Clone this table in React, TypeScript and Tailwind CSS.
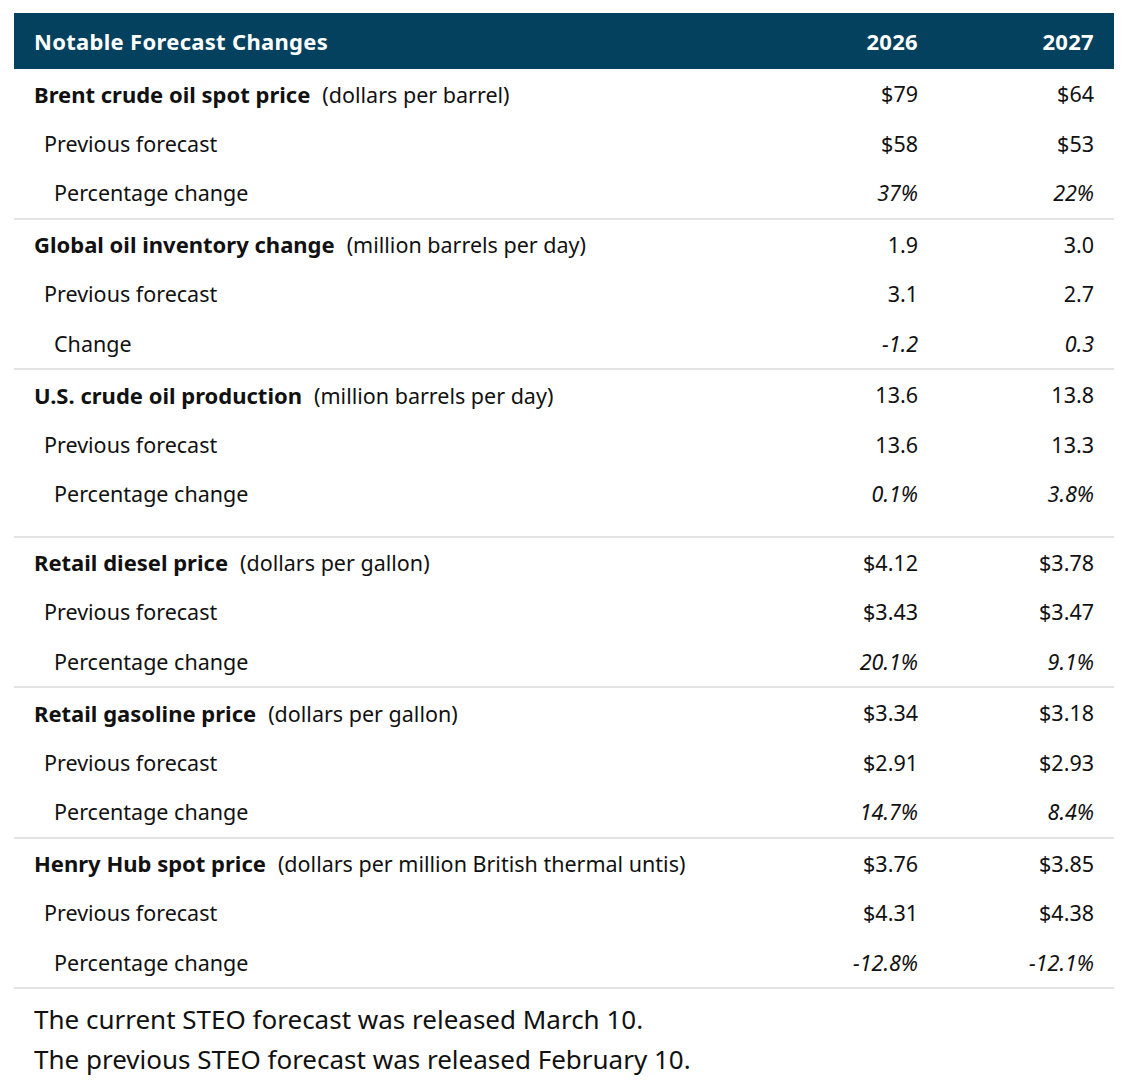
import React from "react";

type Row = { label: string; unit?: string; level: 0 | 1 | 2; a: string; b: string };

const sections: { rows: Row[]; extra?: boolean }[] = [
  {
    rows: [
      { label: "Brent crude oil spot price", unit: "(dollars per barrel)", level: 0, a: "$79", b: "$64" },
      { label: "Previous forecast", level: 1, a: "$58", b: "$53" },
      { label: "Percentage change", level: 2, a: "37%", b: "22%" },
    ],
  },
  {
    rows: [
      { label: "Global oil inventory change", unit: "(million barrels per day)", level: 0, a: "1.9", b: "3.0" },
      { label: "Previous forecast", level: 1, a: "3.1", b: "2.7" },
      { label: "Change", level: 2, a: "-1.2", b: "0.3" },
    ],
  },
  {
    extra: true,
    rows: [
      { label: "U.S. crude oil production", unit: "(million barrels per day)", level: 0, a: "13.6", b: "13.8" },
      { label: "Previous forecast", level: 1, a: "13.6", b: "13.3" },
      { label: "Percentage change", level: 2, a: "0.1%", b: "3.8%" },
    ],
  },
  {
    rows: [
      { label: "Retail diesel price", unit: "(dollars per gallon)", level: 0, a: "$4.12", b: "$3.78" },
      { label: "Previous forecast", level: 1, a: "$3.43", b: "$3.47" },
      { label: "Percentage change", level: 2, a: "20.1%", b: "9.1%" },
    ],
  },
  {
    rows: [
      { label: "Retail gasoline price", unit: "(dollars per gallon)", level: 0, a: "$3.34", b: "$3.18" },
      { label: "Previous forecast", level: 1, a: "$2.91", b: "$2.93" },
      { label: "Percentage change", level: 2, a: "14.7%", b: "8.4%" },
    ],
  },
  {
    rows: [
      { label: "Henry Hub spot price", unit: "(dollars per million British thermal untis)", level: 0, a: "$3.76", b: "$3.85" },
      { label: "Previous forecast", level: 1, a: "$4.31", b: "$4.38" },
      { label: "Percentage change", level: 2, a: "-12.8%", b: "-12.1%" },
    ],
  },
];

function TableRow({ row }: { row: Row }) {
  const pad = row.level === 0 ? "pl-5" : row.level === 1 ? "pl-[30px]" : "pl-10";
  const num = row.level === 2 ? "italic" : "";
  return (
    <div className="flex items-center h-[49.5px] pt-px text-[21.5px] text-[#111]">
      <div className={`flex-1 whitespace-nowrap ${pad}`}>
        {row.level === 0 ? (
          <>
            <span className="font-bold text-[22px]">{row.label}</span>
            <span className="ml-3">{row.unit}</span>
          </>
        ) : (
          row.label
        )}
      </div>
      <div className={`w-[120px] text-right ${num}`}>{row.a}</div>
      <div className={`w-[196px] text-right pr-5 ${num}`}>{row.b}</div>
    </div>
  );
}

export default function App() {
  return (
    <div
      className="bg-white min-h-screen pt-[13px] px-[14px] w-[1128px]"
      style={{ fontFamily: "'Noto Sans', Lato, sans-serif" }}
    >
      <div className="flex items-center h-14 bg-[#03415e] text-white font-bold text-[22px] tracking-[0.3px]">
        <div className="flex-1 pl-5">Notable Forecast Changes</div>
        <div className="w-[120px] text-right">2026</div>
        <div className="w-[196px] text-right pr-5">2027</div>
      </div>
      {sections.map((s, i) => (
        <div key={i} className={`border-b-2 border-[#e3e3e3] ${s.extra ? "pb-[17px]" : ""}`}>
          {s.rows.map((r, j) => (
            <TableRow key={j} row={r} />
          ))}
        </div>
      ))}
      <div className="pl-5 pt-[10px] text-[26px] leading-10 text-[#111]">
        <p>The current STEO forecast was released March 10.</p>
        <p>The previous STEO forecast was released February 10.</p>
      </div>
    </div>
  );
}
